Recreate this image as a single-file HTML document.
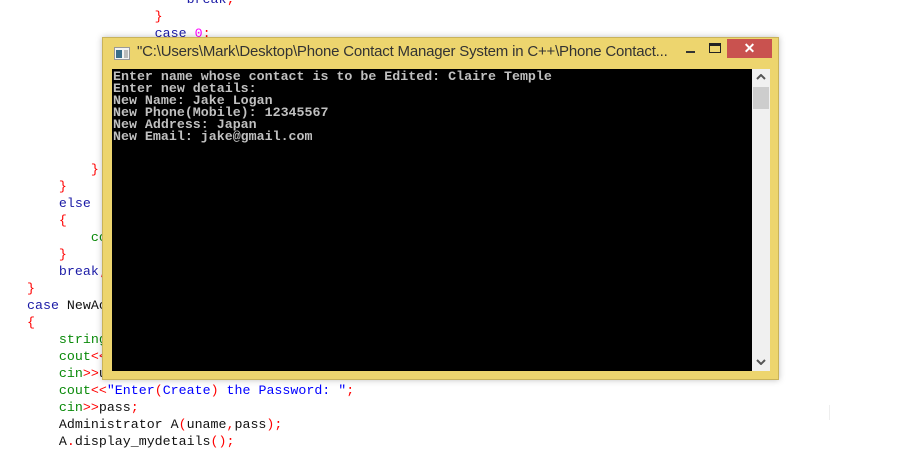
<!DOCTYPE html>
<html><head><meta charset="utf-8"><style>
body{margin:0;width:907px;height:450px;background:#fff;position:relative;overflow:hidden}
pre.code{position:absolute;left:27px;top:-9px;margin:0;font:13.3px/17px "Liberation Mono",monospace;color:#111}
.k{color:#1a1aa6}.g{color:#0a8a0a}.r{color:#f00}.s{color:#0000ff}.m{color:#f0f}
.win{position:absolute;left:102px;top:37px;width:675px;height:341px;background:#edd56e;border:1px solid #c9b35a;box-shadow:0 0 6px rgba(0,0,0,.25)}
.title{position:absolute;left:34px;top:5px;font:15px "Liberation Sans",sans-serif;color:#333;white-space:nowrap;letter-spacing:-.2px}
.con{position:absolute;left:9px;top:31px;width:640px;height:302px;background:#000}
.con pre{margin:0;padding:2px 0 0 1px;font:bold 13.3px/12px "Liberation Mono",monospace;color:#c0c0c0}
.sb{position:absolute;left:649px;top:31px;width:18px;height:302px;background:#f0f0f0}
.thumb{position:absolute;left:1px;top:18px;width:16px;height:22px;background:#cdcdcd}
.close{position:absolute;left:624px;top:1px;width:45px;height:19px;background:#c9524f;color:#fff;text-align:center;font:bold 14px/19px "Liberation Sans",sans-serif}
</style></head><body>
<pre class="code">                    <span class="k">break</span><span class="r">;</span>
                <span class="r">}</span>
                <span class="k">case</span> <span class="m">0</span><span class="r">:</span>







        <span class="r">}</span>
    <span class="r">}</span>
    <span class="k">else</span>
    <span class="r">{</span>
        <span class="g">cout</span>
    <span class="r">}</span>
    <span class="k">break</span><span class="r">;</span>
<span class="r">}</span>
<span class="k">case</span> NewAccount<span class="r">:</span>
<span class="r">{</span>
    <span class="g">string</span>
    <span class="g">cout</span><span class="r">&lt;&lt;</span>
    <span class="g">cin</span><span class="r">&gt;&gt;</span>uname<span class="r">;</span>
    <span class="g">cout</span><span class="r">&lt;&lt;</span><span class="s">"Enter</span><span class="r">(</span><span class="s">Create</span><span class="r">)</span><span class="s"> the Password: "</span><span class="r">;</span>
    <span class="g">cin</span><span class="r">&gt;&gt;</span>pass<span class="r">;</span>
    Administrator A<span class="r">(</span>uname<span class="r">,</span>pass<span class="r">);</span>
    A<span class="r">.</span>display_mydetails<span class="r">();</span>
</pre>
<div style="position:absolute;left:829px;top:405px;width:1px;height:15px;background:#eee"></div>
<div class="win">
  <svg style="position:absolute;left:11px;top:9px" width="16" height="13"><rect x="0.5" y="0.5" width="15" height="12" fill="#f4f4f4" stroke="#999"/><rect x="2" y="3" width="6" height="8" fill="#3a6e8a"/><rect x="10" y="3" width="4" height="8" fill="#bbb"/></svg>
  <div class="title">"C:\Users\Mark\Desktop\Phone Contact Manager System in C++\Phone Contact...</div>
  <div style="position:absolute;left:583px;top:13px;width:9px;height:2px;background:#333"></div>
  <div style="position:absolute;left:606px;top:5px;width:10px;height:6px;border:1.5px solid #222;border-top-width:3px"></div>
  <div class="close">✕</div>
  <div class="con"><pre>Enter name whose contact is to be Edited: Claire Temple
Enter new details:
New Name: Jake Logan
New Phone(Mobile): 12345567
New Address: Japan
New Email: jake@gmail.com</pre></div>
  <div class="sb"><div class="thumb"></div>
    <svg style="position:absolute;left:4px;top:5px" width="10" height="6"><path d="M1 5 L5 1 L9 5" stroke="#555" stroke-width="2" fill="none"/></svg>
    <svg style="position:absolute;left:4px;top:290px" width="10" height="6"><path d="M1 1 L5 5 L9 1" stroke="#555" stroke-width="2" fill="none"/></svg>
  </div>
</div>
</body></html>
